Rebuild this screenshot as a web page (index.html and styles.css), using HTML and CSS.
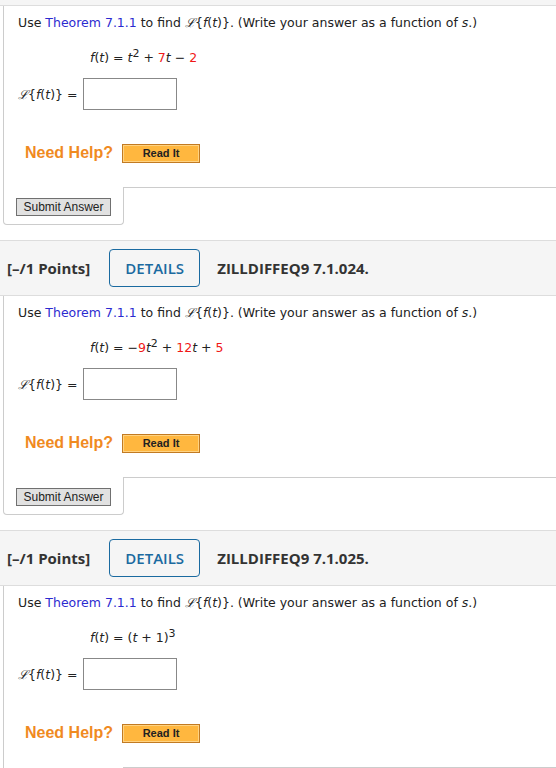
FILE: index.html
```html
<!DOCTYPE html>
<html lang="en">
<head>
  <meta charset="UTF-8" />
  <meta name="viewport" content="width=device-width, initial-scale=1.0"/>
  <title>ZILLDIFFEQ9 7.1</title>
  <link rel="stylesheet" href="styles.css">
</head>
<body>
  <div class="stub"></div>

  <div class="question">
    <div class="panel">
      <p class="prompt">Use <a class="link">Theorem 7.1.1</a> to find <span class="lap">&#8466;</span>{<i>f</i>(<i>t</i>)}. (Write your answer as a function of <i>s</i>.)</p>
      <p class="formula"><i>f</i>(<i>t</i>) = <i>t</i><sup>2</sup> + <span class="red">7</span><i>t</i> &minus; <span class="red">2</span></p>
      <div class="answer-row">
        <span class="answer-label"><span class="lap">&#8466;</span>{<i>f</i>(<i>t</i>)} =</span>
        <input type="text" class="answer-box" />
      </div>
      <div class="help">
        <span class="need-help">Need Help?</span>
        <button class="read-it">Read It</button>
      </div>
    </div>
    <div class="foot">
      <div class="tab"><button class="submit">Submit Answer</button></div>
      <div class="rest"></div>
    </div>
  </div>

  <div class="q-header">
    <span class="points">[&ndash;/1 Points]</span>
    <span class="details">DETAILS</span>
    <span class="code">ZILLDIFFEQ9 7.1.024.</span>
  </div>

  <div class="question">
    <div class="panel">
      <p class="prompt">Use <a class="link">Theorem 7.1.1</a> to find <span class="lap">&#8466;</span>{<i>f</i>(<i>t</i>)}. (Write your answer as a function of <i>s</i>.)</p>
      <p class="formula"><i>f</i>(<i>t</i>) = &minus;<span class="red">9</span><i>t</i><sup>2</sup> + <span class="red">12</span><i>t</i> + <span class="red">5</span></p>
      <div class="answer-row">
        <span class="answer-label"><span class="lap">&#8466;</span>{<i>f</i>(<i>t</i>)} =</span>
        <input type="text" class="answer-box" />
      </div>
      <div class="help">
        <span class="need-help">Need Help?</span>
        <button class="read-it">Read It</button>
      </div>
    </div>
    <div class="foot">
      <div class="tab"><button class="submit">Submit Answer</button></div>
      <div class="rest"></div>
    </div>
  </div>

  <div class="q-header">
    <span class="points">[&ndash;/1 Points]</span>
    <span class="details">DETAILS</span>
    <span class="code">ZILLDIFFEQ9 7.1.025.</span>
  </div>

  <div class="question">
    <div class="panel">
      <p class="prompt">Use <a class="link">Theorem 7.1.1</a> to find <span class="lap">&#8466;</span>{<i>f</i>(<i>t</i>)}. (Write your answer as a function of <i>s</i>.)</p>
      <p class="formula"><i>f</i>(<i>t</i>) = (<i>t</i> + 1)<sup>3</sup></p>
      <div class="answer-row">
        <span class="answer-label"><span class="lap">&#8466;</span>{<i>f</i>(<i>t</i>)} =</span>
        <input type="text" class="answer-box" />
      </div>
      <div class="help">
        <span class="need-help">Need Help?</span>
        <button class="read-it">Read It</button>
      </div>
    </div>
    <div class="foot">
      <div class="tab"><button class="submit">Submit Answer</button></div>
      <div class="rest"></div>
    </div>
  </div>
</body>
</html>
```

FILE: styles.css
```css
body {
  margin: 0;
  font-family: "DejaVu Sans", Verdana, sans-serif;
  font-size: 12.5px;
  color: #222;
  background: #fff;
}

.stub {
  height: 5px;
  background: #f5f5f5;
  border-bottom: 1px solid #ddd;
}

.question {
  margin-left: 3px;
  margin-bottom: 15px;
}

.panel {
  border-left: 1px solid #ccc;
  padding: 9px 0 24px 14px;
}

.prompt, .formula {
  margin: 0;
  line-height: 16px;
  white-space: nowrap;
}

.link {
  color: #2b2bd0;
}

.lap {
  font-family: "DejaVu Serif", serif;
  font-style: italic;
}

.formula {
  margin-top: 19px;
  padding-left: 72px;
}

.formula sup {
  font-size: 11px;
  line-height: 0;
}

.red {
  color: #f01818;
}

.answer-row {
  display: flex;
  align-items: center;
  gap: 6px;
  margin-top: 12px;
}

.answer-box {
  width: 94px;
  height: 32px;
  box-sizing: border-box;
  border: 1px solid #888;
  margin: 0;
  padding: 0 4px;
}

.help {
  display: flex;
  align-items: center;
  gap: 9px;
  margin-top: 33px;
  height: 20px;
  padding-left: 7px;
}

.need-help {
  font-family: "Liberation Sans", Arial, sans-serif;
  font-weight: bold;
  font-size: 16px;
  color: #f08a1f;
}

.read-it {
  width: 78px;
  height: 19px;
  padding: 0;
  font-family: "Liberation Sans", Arial, sans-serif;
  font-weight: bold;
  font-size: 11px;
  color: #222;
  background: #ffb73f;
  border: 1px solid #c27a22;
  box-shadow: inset 0 0 0 1px #ffd382;
}

.foot {
  display: flex;
}

.tab {
  width: 107px;
  border: 1px solid #ccc;
  border-top: none;
  border-radius: 0 0 4px 4px;
  padding: 11px 0 8px 12px;
}

.rest {
  flex: 1;
  border-top: 1px solid #ccc;
}

.submit {
  display: block;
  width: 95px;
  height: 18px;
  padding: 0;
  font-family: "Liberation Sans", Arial, sans-serif;
  font-size: 12px;
  color: #222;
  background: #e1e1e1;
  border: 1px solid #707070;
}

.q-header {
  display: flex;
  align-items: center;
  height: 54px;
  background: #f5f5f5;
  border-top: 1px solid #ddd;
  border-bottom: 1px solid #ddd;
  padding-left: 7px;
  font-family: "Open Sans", sans-serif;
  font-size: 15px;
  font-weight: bold;
  color: #333;
}

.details {
  margin-left: 19px;
  width: 89px;
  height: 36px;
  display: flex;
  align-items: center;
  justify-content: center;
  border: 1px solid #1a6aa0;
  border-radius: 4px;
  color: #1a6aa0;
  font-weight: 600;
}

.code {
  margin-left: 17px;
}
```
